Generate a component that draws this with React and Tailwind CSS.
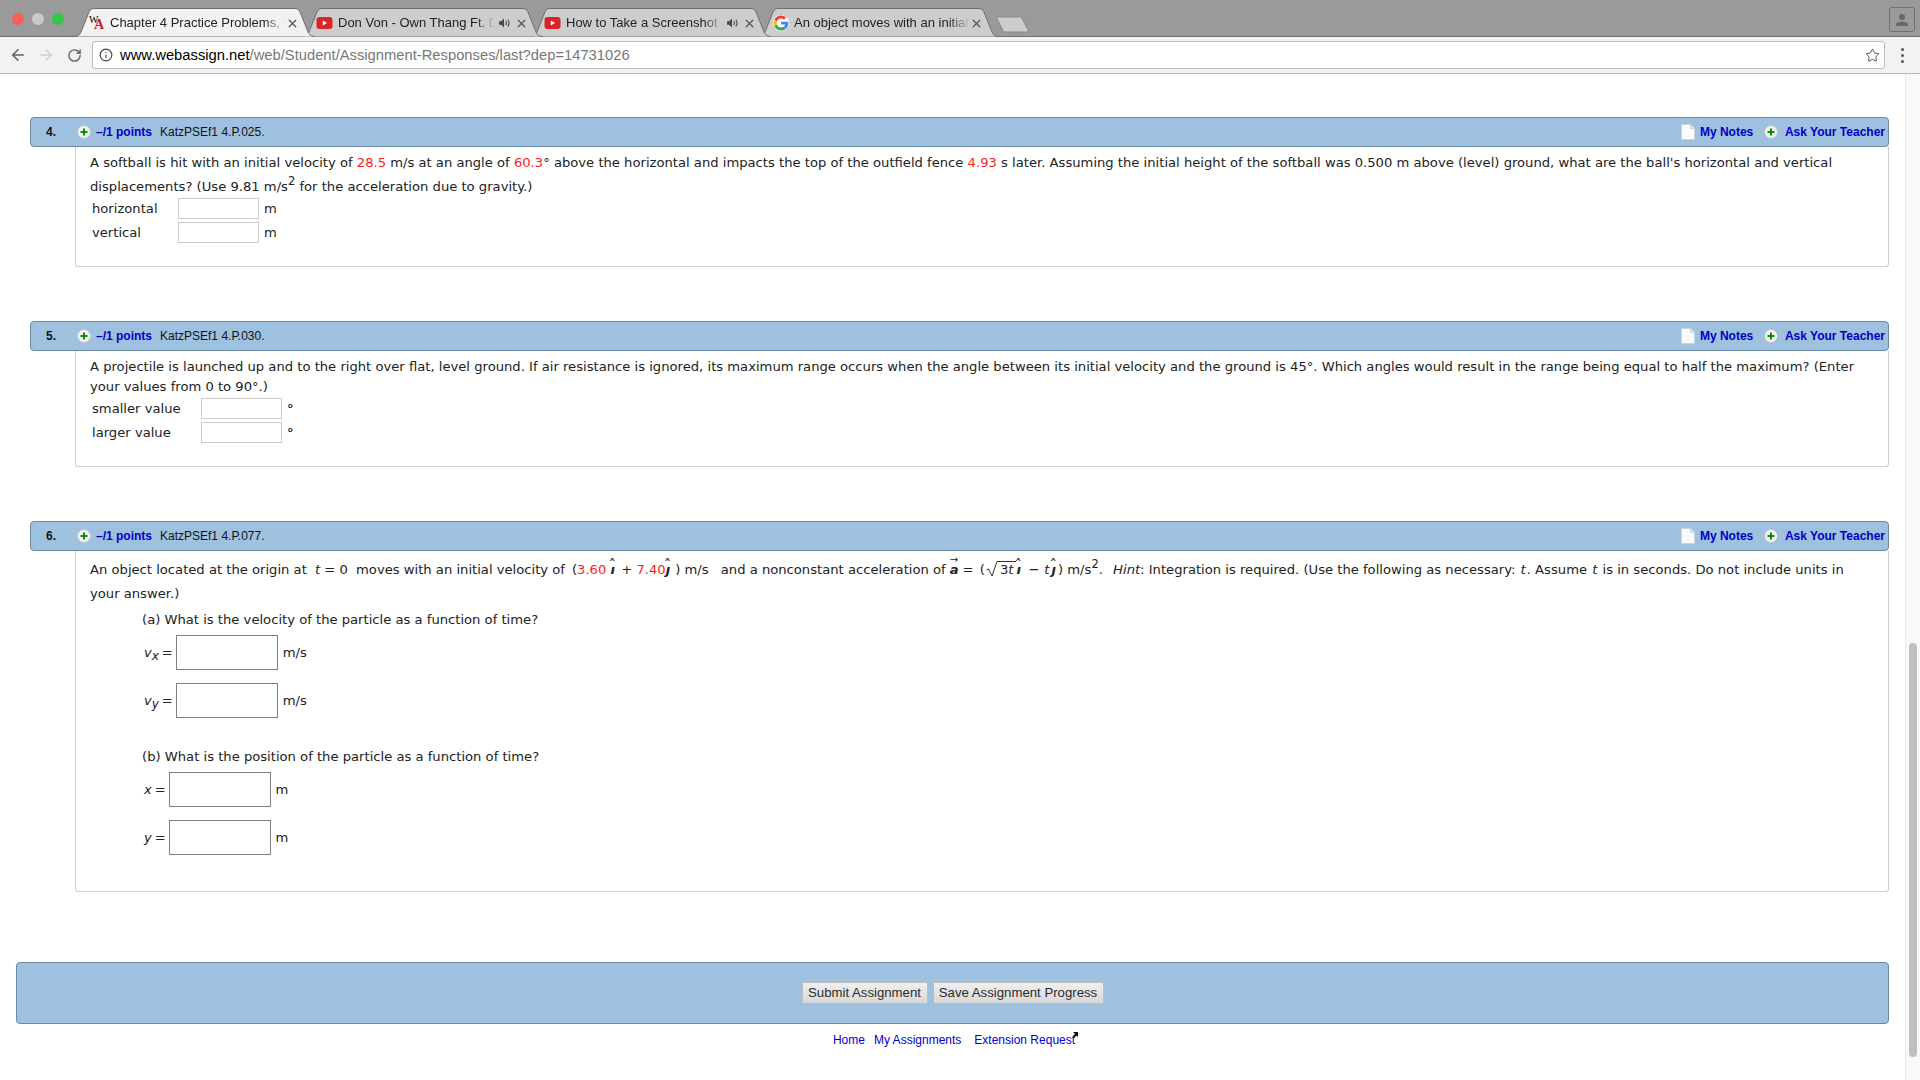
import React from 'react';
import { ArrowLeft, ArrowRight, RotateCw, Info, Star, X } from 'lucide-react';

const TabShape = ({ active }) => (
  <svg className="absolute left-0 top-0" width="241" height="29" viewBox="0 0 241 29">
    <path
      d="M0 28.5C4 28.5 6 26.5 7 24L15 4C16 1.5 18 .5 20 .5L221 .5C223 .5 225 1.5 226 4L234 24C235 26.5 237 28.5 241 28.5"
      fill={active ? '#f2f2f2' : '#cdcdcd'}
      stroke="#6f6f6f"
    />
  </svg>
);

const YoutubeIcon = () => (
  <svg width="17" height="14" viewBox="0 0 17 14" className="-ml-[1px]">
    <rect x="0.5" y="1" width="16" height="12" rx="3" fill="#d9252a" />
    <path d="M6.8 4.5L11 7L6.8 9.5Z" fill="#fff" />
  </svg>
);

const GoogleIcon = () => (
  <svg width="16" height="16" viewBox="0 0 48 48">
    <circle cx="24" cy="24" r="24" fill="#fff" />
    <path fill="#EA4335" d="M24 10.5c3.4 0 6.4 1.2 8.8 3.4l6.5-6.5C35.4 3.8 30.1 1.5 24 1.5 15.200 1.500 7.600 6.500 4 13.900l7.600 5.900C13.400 14.300 18.200 10.500 24 10.500z" />
    <path fill="#4285F4" d="M46 24.500c0-1.600-.1-3.100-.4-4.500H24v8.500h12.400c-.5 2.900-2.100 5.300-4.600 6.900l7.300 5.700C43.400 36.700 46 31.100 46 24.500z" />
    <path fill="#FBBC05" d="M11.600 28.200c-.4-1.300-.7-2.700-.7-4.200s.2-2.900.7-4.200L4 13.900C2.400 17 1.500 20.400 1.500 24s.9 7 2.500 10.100l7.600-5.900z" />
    <path fill="#34A853" d="M24 46.500c6.100 0 11.200-2 14.900-5.400l-7.300-5.700c-2 1.400-4.600 2.200-7.600 2.200-5.800 0-10.600-3.900-12.400-9.200L4 34.100C7.600 41.500 15.200 46.500 24 46.500z" />
  </svg>
);

const WebAssignIcon = () => (
  <span className="relative block h-[16px] w-[15px] font-['Liberation_Serif',serif]">
    <span className="absolute left-0 top-0 text-[10px] leading-[10px] text-black">W</span>
    <span className="absolute bottom-0 right-0 text-[14px] font-bold leading-[13px] text-[#c8201e]">A</span>
  </span>
);

const SpeakerIcon = () => (
  <svg width="11" height="10" viewBox="0 0 11 10" className="shrink-0">
    <path d="M0 3.300H2L5 .5V9.500L2 6.700H0Z" fill="#4a4a4a" />
    <path d="M6.800 3C7.500 4.200 7.500 5.800 6.800 7M8.800 1.500C10.200 3.500 10.200 6.500 8.800 8.500" fill="none" stroke="#4a4a4a" strokeWidth="1.100" />
  </svg>
);

const Tab = ({ title, icon, active, muted, zClass }) => (
  <div className={`relative -ml-[13px] h-[29px] w-[241px] first:ml-0 ${zClass}`}>
    <TabShape active={active} />
    <div className="relative flex h-[29px] items-center pl-[15px] pt-[1px]">
      <div className="flex w-[21px] shrink-0 items-center">{icon}</div>
      <div className={`overflow-hidden whitespace-nowrap font-['Liberation_Sans',sans-serif] text-[13px] text-[#222] [mask-image:linear-gradient(to_right,black_88%,transparent)] ${muted ? 'w-[157px]' : 'w-[176px]'}`}>
        {title}
      </div>
      {muted && <div className="ml-[4px] w-[16px]"><SpeakerIcon /></div>}
      <X size={13} strokeWidth={2.4} className="shrink-0 text-[#555]" />
    </div>
  </div>
);

const BrowserChrome = () => (
  <div className="shrink-0">
    <div className="flex h-[37px] border-b border-[#6f6f6f] bg-[#9a9a9a]">
      <div className="flex w-[74px] shrink-0 items-start gap-[8px] pl-[12px] pt-[13px]">
        <span className="h-[12px] w-[12px] rounded-full bg-[#f95e58]" />
        <span className="h-[12px] w-[12px] rounded-full bg-[#c9c9c9]" />
        <span className="h-[12px] w-[12px] rounded-full bg-[#36c54a]" />
      </div>
      <div className="flex pt-[8px]">
        <Tab active zClass="z-10" title="Chapter 4 Practice Problems, PHYS" icon={<WebAssignIcon />} />
        <Tab muted zClass="z-[3]" title="Don Von - Own Thang Ft. Devvon" icon={<YoutubeIcon />} />
        <Tab muted zClass="z-[2]" title="How to Take a Screenshot on a Mac" icon={<YoutubeIcon />} />
        <Tab zClass="z-[1]" title="An object moves with an initial velocity" icon={<GoogleIcon />} />
        <svg width="33" height="17" viewBox="0 0 33 17" className="-ml-[3px] mt-[8px]">
          <path d="M1 1H24C25 1 25.500 1.500 26 2.500L32 14C32.500 15.200 32 16 31 16H9C8 16 7.500 15.500 7 14.500L.7 2C.4 1.400.5 1 1 1Z" fill="#cdcdcd" stroke="#8a8a8a" />
        </svg>
      </div>
      <div className="ml-auto mr-[5px] mt-[7px] flex h-[25px] w-[26px] items-center justify-center rounded-[3px] border border-[#707070]">
        <svg width="14" height="14" viewBox="0 0 14 14">
          <circle cx="7" cy="4" r="3" fill="#686868" />
          <path d="M1 13V11.500C1 9.800 4 8.800 7 8.800S13 9.800 13 11.500V13Z" fill="#686868" />
        </svg>
      </div>
    </div>
    <div className="flex h-[37px] items-center border-b border-[#b8b8b8] bg-[#f2f2f2]">
      <div className="flex w-[92px] shrink-0 items-center pl-[9px]">
        <ArrowLeft size={18} strokeWidth={2} className="text-[#606060]" />
        <ArrowRight size={18} strokeWidth={2} className="ml-[10px] text-[#cfcfcf]" />
        <RotateCw size={15} strokeWidth={2.2} className="ml-[12px] text-[#606060]" />
      </div>
      <div className="flex h-[28px] w-[1793px] items-center rounded-[3px] border border-[#bcbcbc] bg-white pl-[6px] pr-[4px]">
        <Info size={14} strokeWidth={2} className="text-[#444]" />
        <div className="ml-[7px] font-['Liberation_Sans',sans-serif] text-[14.75px] text-[#777]">
          <span className="text-black">www.webassign.net</span>/web/Student/Assignment-Responses/last?dep=14731026
        </div>
        <Star size={15} strokeWidth={1.6} className="ml-auto text-[#555]" />
      </div>
      <div className="flex flex-1 flex-col items-center gap-[3px]">
        <span className="h-[3px] w-[3px] rounded-full bg-[#555]" />
        <span className="h-[3px] w-[3px] rounded-full bg-[#555]" />
        <span className="h-[3px] w-[3px] rounded-full bg-[#555]" />
      </div>
    </div>
  </div>
);

const PlusIcon = () => (
  <svg width="14" height="14" viewBox="0 0 14 14" className="shrink-0">
    <circle cx="7" cy="7" r="6.500" fill="#f2f2f2" stroke="#c4c4c4" />
    <path d="M7 3.500V10.500M3.500 7H10.500" stroke="#0c8a0c" strokeWidth="2" />
  </svg>
);

const NoteIcon = () => (
  <svg width="14" height="16" viewBox="0 0 14 16" className="shrink-0">
    <path d="M.5 .5H9.500L13.500 4.500V15.500H.5Z" fill="#fbfbfb" stroke="#c9d4de" />
    <path d="M9.500 .5V4.500H13.500" fill="#e8e8e8" stroke="#c9d4de" />
  </svg>
);

const QuestionHeader = ({ num, code }) => (
  <div className="flex h-[30px] items-center rounded-[4px] border border-[#6b8aa3] bg-[#9dc1df] font-['Liberation_Sans',sans-serif] text-[12px]">
    <div className="w-[46px] pl-[15px] font-bold text-[#111]">{num}.</div>
    <PlusIcon />
    <div className="ml-[5px] font-bold text-[#0000c4]">–/1 points</div>
    <div className="ml-[8px] text-[#111]">{code}</div>
    <div className="ml-auto flex items-center pr-[3px] font-bold text-[#0000c4]">
      <NoteIcon />
      <span className="ml-[5px] w-[64px]">My Notes</span>
      <PlusIcon />
      <span className="ml-[7px]">Ask Your Teacher</span>
    </div>
  </div>
);

const Question = ({ num, code, bodyClass, children }) => (
  <div className="ml-[30px] mr-[16px]">
    <QuestionHeader num={num} code={code} />
    <div className={`ml-[45px] rounded-b-[3px] border-x border-b border-[#cfcfcf] pl-[14px] font-['DejaVu_Sans',sans-serif] text-[13.15px] text-[#222] ${bodyClass}`}>
      {children}
    </div>
  </div>
);

const Red = ({ children }) => <span className="text-[#ff1a1a]">{children}</span>;

const LabelRow = ({ label, labelClass, unit }) => (
  <div className="flex h-[24px] items-center">
    <div className={`pl-[2px] ${labelClass}`}>{label}</div>
    <div className="mb-[1px] h-[21px] w-[81px] border border-[#cccccc] bg-white" />
    <div className="ml-[5px]">{unit}</div>
  </div>
);

const Hat = ({ children, className = '' }) => (
  <span className={`relative inline-block font-bold italic ${className}`}>
    <span className="absolute -top-[4px] left-[-2px] text-[15px] not-italic font-normal">ˆ</span>
    {children}
  </span>
);

const AnswerRow = ({ label, sub, unit }) => (
  <div className="flex h-[35px] items-center">
    <div className="flex items-center text-[13px]">
      <i>{label}</i>
      {sub && <i className="relative top-[3px] text-[12px]">{sub}</i>}
      <span className="ml-[3px]">=</span>
    </div>
    <div className="ml-[3px] h-[35px] w-[102px] border border-[#808080] bg-white" />
    <div className="ml-[5px]">{unit}</div>
  </div>
);

const Footer = () => (
  <div className="ml-[16px] mr-[16px] mt-[70px]">
    <div className="flex h-[62px] items-center justify-center gap-[5px] rounded-[4px] border border-[#6b8aa3] bg-[#9dc1df] font-['Liberation_Sans',sans-serif] text-[13.2px] text-[#2b2b2b]">
      <div className="flex h-[22px] w-[126px] items-center justify-center border border-[#bdbdbd] bg-gradient-to-b from-[#f0f0f0] to-[#d8d8d8]">Submit Assignment</div>
      <div className="flex h-[22px] w-[171px] items-center justify-center border border-[#bdbdbd] bg-gradient-to-b from-[#f0f0f0] to-[#d8d8d8]">Save Assignment Progress</div>
    </div>
    <div className="mt-[9px] flex justify-center pl-[6px] font-['Liberation_Sans',sans-serif] text-[12px] leading-[14px] text-[#0000d0]">
      <span>Home</span>
      <span className="ml-[9px]">My Assignments</span>
      <span className="ml-[13px]">Extension Request</span>
      <svg width="5" height="6" viewBox="0 0 5 6" className="-ml-[2px] -mt-[1px]">
        <path d="M0 0H5V5L3.500 3.500L1.500 5.500L0 4L2 2Z" fill="#111" />
      </svg>
    </div>
  </div>
);

export default function App() {
  return (
    <div className="flex h-screen flex-col overflow-hidden bg-white">
      <BrowserChrome />
      <div className="flex min-h-0 flex-1">
        <div className="min-w-0 flex-1 pt-[43px]">
          <Question num={4} code="KatzPSEf1 4.P.025." bodyClass="h-[120px] pt-[6px]">
            <div className="h-[20px] whitespace-nowrap leading-[20px]">
              A softball is hit with an initial velocity of <Red>28.5</Red> m/s at an angle of <Red>60.3</Red>° above the horizontal and impacts the top of the outfield fence <Red>4.93</Red> s later. Assuming the initial height of the softball was 0.500 m above (level) ground, what are the ball's horizontal and vertical
            </div>
            <div className="mt-[4px] h-[20px] leading-[20px]">
              displacements? (Use 9.81 m/s<sup className="text-[11.5px]">2</sup> for the acceleration due to gravity.)
            </div>
            <LabelRow label="horizontal" labelClass="w-[88px]" unit="m" />
            <LabelRow label="vertical" labelClass="w-[88px]" unit="m" />
          </Question>

          <div className="mt-[54px]">
            <Question num={5} code="KatzPSEf1 4.P.030." bodyClass="h-[116px] pt-[6px]">
              <div className="pr-[20px] leading-[20px]">
                A projectile is launched up and to the right over flat, level ground. If air resistance is ignored, its maximum range occurs when the angle between its initial velocity and the ground is 45°. Which angles would result in the range being equal to half the maximum? (Enter your values from 0 to 90°.)
              </div>
              <LabelRow label="smaller value" labelClass="w-[111px]" unit={<span className="font-bold">°</span>} />
              <LabelRow label="larger value" labelClass="w-[111px]" unit={<span className="font-bold">°</span>} />
            </Question>
          </div>

          <div className="mt-[54px]">
            <Question num={6} code="KatzPSEf1 4.P.077." bodyClass="h-[341px] pt-[9px]">
              <div className="h-[20px] whitespace-nowrap leading-[20px]">
                An object located at the origin at <i className="ml-[4px]">t</i> = 0 <span className="ml-[4px]">moves with an initial velocity of</span>
                <span className="ml-[7px]">(</span><Red>3.60</Red> <Hat>ı</Hat> <span className="ml-[2px]">+</span> <Red>7.40</Red><Hat className="mr-[5px]">ȷ</Hat>) m/s <span className="ml-[8px]">and a nonconstant acceleration of</span>
                <span className="relative ml-[4px] inline-block font-bold italic">
                  <span className="absolute -top-[10px] left-0 text-[10px] not-italic font-normal">→</span>a
                </span>
                <span className="ml-[4px]">=</span> <span className="ml-[2px]">(</span>
                <svg width="14" height="16" viewBox="0 0 14 16" className="ml-[1px] inline-block align-[-3px]">
                  <path d="M.5 9L2.500 8L6 15L11 .5H14" fill="none" stroke="#333" />
                </svg>
                <span className="border-t border-[#333] pr-[3px]">3<i>t</i></span><Hat>ı</Hat> <span className="ml-[3px]">−</span> <i className="ml-[1px]">t</i><Hat className="ml-[2px] mr-[2px]">ȷ</Hat>) m/s<sup className="text-[11.5px]">2</sup>. <i className="ml-[6px]">Hint</i>: Integration is required. (Use the following as necessary: <i className="mx-[1px]">t</i>. Assume <i className="mx-[1px]">t</i> is in seconds. Do not include units in
              </div>
              <div className="mt-[4px] leading-[20px]">your answer.)</div>
              <div className="ml-[52px] mt-[6px] leading-[20px]">(a) What is the velocity of the particle as a function of time?</div>
              <div className="ml-[54px] mt-[5px] flex flex-col gap-[13px]">
                <AnswerRow label="v" sub="x" unit="m/s" />
                <AnswerRow label="v" sub="y" unit="m/s" />
              </div>
              <div className="ml-[52px] mt-[29px] leading-[20px]">(b) What is the position of the particle as a function of time?</div>
              <div className="ml-[54px] mt-[5px] flex flex-col gap-[13px]">
                <AnswerRow label="x" unit="m" />
                <AnswerRow label="y" unit="m" />
              </div>
            </Question>
          </div>

          <Footer />
        </div>
        <div className="w-[15px] shrink-0 border-l border-[#e8e8e8] bg-[#f9f9f9] pl-[3px] pt-[569px]">
          <div className="h-[414px] w-[8px] rounded-full bg-[#bfbfbf]" />
        </div>
      </div>
    </div>
  );
}
